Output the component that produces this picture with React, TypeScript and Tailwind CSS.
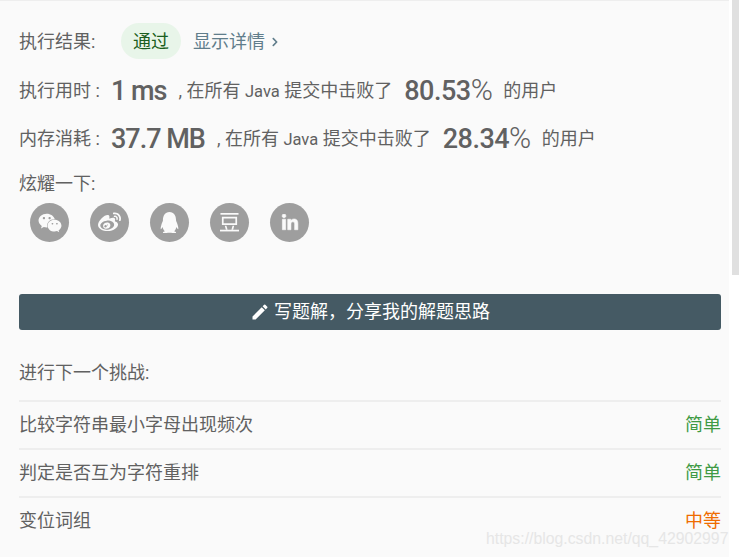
import { MdEdit } from "react-icons/md";
import { FaWeixin, FaWeibo, FaQq, FaLinkedinIn, FaChevronRight } from "react-icons/fa";

const cjk = "font-['Roboto','Noto_Sans_CJK_SC',sans-serif]";

function DoubanIcon({ className }: { className?: string }) {
  return (
    <svg viewBox="0 0 20 20" fill="currentColor" className={className}>
      <rect x="0.5" y="0" width="19" height="1.8" />
      <path d="M2 4h16v8.5H2zM3.8 5.8v4.9h12.4V5.8z" fillRule="evenodd" />
      <path d="M5 13.5h1.8l1.2 4H6.2zM13.2 13.5H15l-1.2 4H12z" />
      <rect x="0" y="17.6" width="20" height="1.8" />
    </svg>
  );
}

const shares = [
  { Icon: FaWeixin, size: "h-6 w-6" },
  { Icon: FaWeibo, size: "h-[23px] w-[23px]" },
  { Icon: FaQq, size: "h-[21px] w-[21px]" },
  { Icon: DoubanIcon, size: "h-[19px] w-[19px]" },
  { Icon: FaLinkedinIn, size: "h-[18px] w-[18px] stroke-[16]" },
];

const problems = [
  { title: "比较字符串最小字母出现频次", level: "简单", color: "text-[#3f9a45]" },
  { title: "判定是否互为字符重排", level: "简单", color: "text-[#3f9a45]" },
  { title: "变位词组", level: "中等", color: "text-[#ef6c00]" },
];

function Stat({
  label,
  value,
  percent,
}: {
  label: string;
  value: string;
  percent: string;
}) {
  return (
    <div className="flex h-12 items-center whitespace-nowrap pt-0.5">
      <span className="w-[92px]">{label}</span>
      <span className="text-[27px] font-medium tracking-[-1px]">{value}</span>
      <span className="ml-3 whitespace-pre">
        , 在所有 <span className="text-[16.5px]">Java</span> 提交中击败了
      </span>
      <span className="-mt-0.5 ml-3 text-[27px] font-medium tracking-[-0.5px]">
        {percent}
        <span className="text-[30px] font-light">%</span>
      </span>
      <span className="ml-[11px]">的用户</span>
    </div>
  );
}

export default function App() {
  return (
    <div
      className={`relative h-[557px] w-[739px] overflow-hidden bg-white text-[18px] leading-6 text-[#616161] ${cjk}`}
    >
      <div className="absolute right-0 top-0 h-[275px] w-[7px] bg-[#e0e0e0]" />

      <main className="h-full w-[729px] border-t border-[#eeeeee] bg-[#fafafa] pl-[19px] pr-2">
        <div className="mt-[22px] flex h-9 items-center">
          <span className="w-[102px] pt-0.5">执行结果:</span>
          <span className="flex h-9 w-[60px] items-center justify-center rounded-full bg-[#e8f5e9] pt-0.5 text-[#1b5e20]">
            通过
          </span>
          <span className="ml-3 flex items-center pt-0.5 text-[#607d8b]">
            显示详情
            <FaChevronRight className="ml-[5px] h-2.5 w-2.5" />
          </span>
        </div>

        <div className="mt-[7px]">
          <Stat label="执行用时 :" value="1 ms" percent="80.53" />
          <Stat label="内存消耗 :" value="37.7 MB" percent="28.34" />
        </div>

        <p className="mt-2.5">炫耀一下:</p>
        <div className="mt-[7px] flex gap-[21px] pl-[11px]">
          {shares.map(({ Icon, size }, i) => (
            <span
              key={i}
              className="flex h-[39px] w-[39px] items-center justify-center rounded-full bg-[#9e9e9e] text-[#fafafa]"
            >
              <Icon className={size} />
            </span>
          ))}
        </div>

        <button className="mt-[52px] flex h-9 w-full items-center justify-center rounded-[3px] bg-[#455a64] text-white">
          <MdEdit className="mr-1 h-5 w-5" />
          写题解，分享我的解题思路
        </button>

        <p className="mt-[31px] h-[39px]">进行下一个挑战:</p>
        <ul>
          {problems.map((p) => (
            <li
              key={p.title}
              className="flex h-12 items-center justify-between border-t-2 border-[#eeeeee]"
            >
              <span>{p.title}</span>
              <span className={p.color}>{p.level}</span>
            </li>
          ))}
        </ul>
      </main>

      <div className="absolute left-[486px] top-[527px] whitespace-nowrap font-['Liberation_Sans',sans-serif] text-[15.8px] text-[#e6e6e6]">
        https://blog.csdn.net/qq_42902997
      </div>
    </div>
  );
}
